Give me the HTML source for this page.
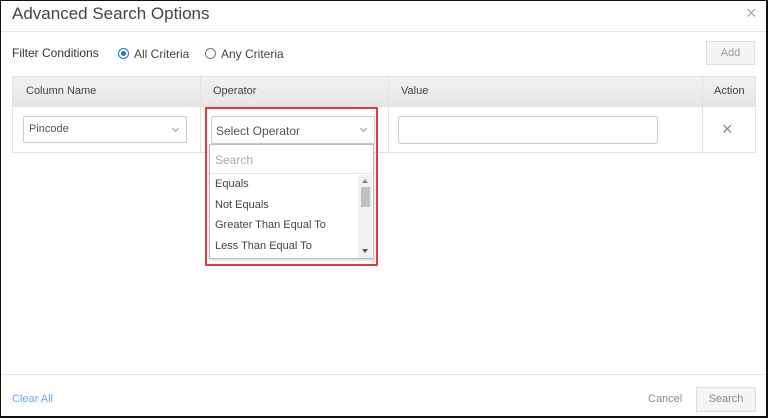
<!DOCTYPE html>
<html><head><meta charset="utf-8"><style>
*{box-sizing:border-box;margin:0;padding:0}
body{width:768px;height:418px;overflow:hidden;background:#fff;font-family:"Liberation Sans",sans-serif;color:#444;position:relative}
.frame{position:absolute;left:0;top:0;width:768px;height:418px;border:1px solid #111;border-right-width:2px;border-bottom-width:2px}
.a{position:absolute}
.t{font-size:11px;color:#444;white-space:nowrap}
.sel{position:absolute;border:1px solid #ccc;border-radius:2px;background:#fff}
.chev{position:absolute;width:5px;height:5px;border-right:1px solid #999;border-bottom:1px solid #999;transform:rotate(45deg)}
</style></head><body>
<div class="frame"></div>
<div class="a" style="left:12px;top:4px;font-size:17px;color:#444">Advanced Search Options</div>
<div class="a" style="left:746px;top:3px;font-size:18px;color:#aaa">×</div>
<div class="a" style="left:1px;top:31px;width:765px;height:1px;background:#e6e6e6"></div>

<div class="a t" style="left:12px;top:46px;font-size:12px;color:#333">Filter Conditions</div>
<div class="a" style="left:118px;top:48px;width:11px;height:11px;border:1px solid #1e73d8;border-radius:50%;background:#fff"><div style="position:absolute;left:2px;top:2px;width:5px;height:5px;border-radius:50%;background:#1e73d8"></div></div>
<div class="a t" style="left:134px;top:47px;font-size:12px">All Criteria</div>
<div class="a" style="left:205px;top:48px;width:11px;height:11px;border:1px solid #777;border-radius:50%"></div>
<div class="a t" style="left:221px;top:47px;font-size:12px">Any Criteria</div>
<div class="a" style="left:706px;top:41px;width:49px;height:24px;border:1px solid #ddd;background:#f5f5f5;font-size:11px;color:#999;text-align:center;line-height:22px">Add</div>

<div class="a" style="left:12px;top:76px;width:744px;height:77px;border:1px solid #e2e2e2"></div>
<div class="a" style="left:13px;top:77px;width:742px;height:29px;background:linear-gradient(#f2f2f2,#e6e6e6)"></div>
<div class="a" style="left:200px;top:77px;width:1px;height:75px;background:#e2e2e2"></div>
<div class="a" style="left:388px;top:77px;width:1px;height:75px;background:#e2e2e2"></div>
<div class="a" style="left:702px;top:77px;width:1px;height:75px;background:#e2e2e2"></div>
<div class="a" style="left:13px;top:106px;width:742px;height:1px;background:#e2e2e2"></div>
<div class="a t" style="left:26px;top:85px">Column Name</div>
<div class="a t" style="left:213px;top:85px">Operator</div>
<div class="a t" style="left:401px;top:85px">Value</div>
<div class="a t" style="left:714px;top:85px">Action</div>

<div class="sel" style="left:23px;top:116px;width:164px;height:27px"><span class="a t" style="left:5px;top:6px;font-size:11px;color:#555">Pincode</span><div class="chev" style="right:8px;top:9px"></div></div>
<div class="sel" style="left:211px;top:116px;width:164px;height:28px"><span class="a t" style="left:4px;top:7px;font-size:12px;color:#555">Select Operator</span><div class="chev" style="right:8px;top:9px"></div></div>
<div class="sel" style="left:398px;top:116px;width:260px;height:28px"></div>
<div class="a" style="left:722px;top:119px;font-size:18px;color:#7a8aa8">×</div>

<div class="a" style="left:209px;top:144px;width:165px;height:115px;border:1px solid #bbb;background:#fff;box-shadow:0 1px 3px rgba(0,0,0,.2)">
 <div class="a t" style="left:5px;top:8px;font-size:12px;color:#aaa">Search</div>
 <div class="a" style="left:0;top:28px;width:163px;height:1px;background:#e6e6e6"></div>
 <div class="a t" style="left:5px;top:33px;font-size:11px;color:#444">Equals</div>
 <div class="a t" style="left:5px;top:54px;font-size:11px;color:#444">Not Equals</div>
 <div class="a t" style="left:5px;top:74px;font-size:11px;color:#444">Greater Than Equal To</div>
 <div class="a t" style="left:5px;top:95px;font-size:11px;color:#444">Less Than Equal To</div>
 <div class="a" style="left:148px;top:30px;width:14px;height:83px;background:#f1f1f1"></div>
 <div class="a" style="left:151px;top:42px;width:9px;height:20px;background:#c1c1c1"></div>
 <div class="a" style="left:152px;top:34px;width:0;height:0;border-left:3px solid transparent;border-right:3px solid transparent;border-bottom:4px solid #888"></div>
 <div class="a" style="left:152px;top:104px;width:0;height:0;border-left:3px solid transparent;border-right:3px solid transparent;border-top:4px solid #555"></div>
</div>
<div class="a" style="left:205px;top:107px;width:173px;height:159px;border:2px solid #e53a3a"></div>

<div class="a" style="left:1px;top:374px;width:765px;height:1px;background:#e6e6e6"></div>
<div class="a t" style="left:12px;top:393px;color:#6aa6f0">Clear All</div>
<div class="a t" style="left:648px;top:393px;color:#888">Cancel</div>
<div class="a" style="left:696px;top:387px;width:60px;height:25px;border:1px solid #ddd;background:#f5f5f5;font-size:11px;color:#888;text-align:center;line-height:23px">Search</div>
</body></html>
